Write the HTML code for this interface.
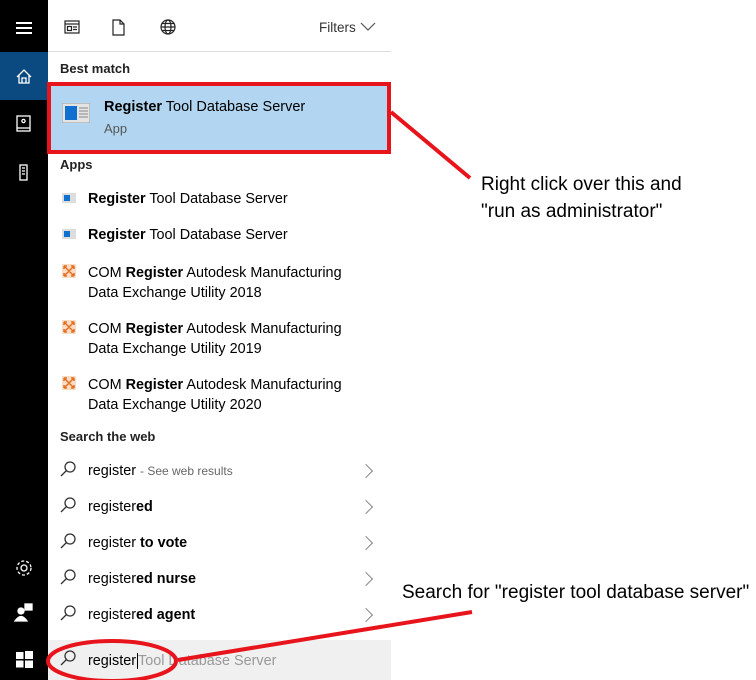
<!DOCTYPE html>
<html><head><meta charset="utf-8"><style>
*{margin:0;padding:0;box-sizing:border-box}
body{width:756px;height:680px;background:#fff;position:relative;overflow:hidden;font-family:"Liberation Sans",sans-serif;color:#000;font-size:14.4px}
.abs{position:absolute}
.side{left:0;top:0;width:48px;height:680px;background:#000}
.t{position:absolute;white-space:nowrap}
b{font-weight:bold}
.hdr{font-size:13px;font-weight:bold;color:#222}
.chev{position:absolute;left:361px;width:10px;height:10px;border-right:1.5px solid #888;border-top:1.5px solid #888;transform:rotate(45deg)}
.ann{font-size:19px;color:#000}
</style></head><body>
<div class="abs side"></div>
<div class="abs" style="left:0;top:52px;width:48px;height:48px;background:#0a4a80"></div>
<div class="abs" style="left:16px;top:22px;width:16px;height:1.5px;background:#fff"></div>
<div class="abs" style="left:16px;top:27px;width:16px;height:1.5px;background:#fff"></div>
<div class="abs" style="left:16px;top:32px;width:16px;height:1.5px;background:#fff"></div>
<svg class="abs" style="left:0;top:0" width="48" height="680" fill="none" stroke="#fff" stroke-width="1.3">
<path d="M17 77 L24 70 L31 77 M19 75 V83 H29 V75 M22 83 V78 H26 V83"/>
<rect x="17" y="116" width="13" height="15"/><circle cx="23.5" cy="121" r="1.6"/><path d="M17 128 H30"/>
<rect x="20" y="165" width="7" height="15"/><path d="M22 168 H25 M22 171 H25 M22 174 H25"/>
<circle cx="24" cy="568" r="3"/><circle cx="24" cy="568" r="7" stroke-dasharray="3 2"/>
<circle cx="21" cy="611" r="3" fill="#fff"/><path d="M15 621 Q21 612 27 621 Z" fill="#fff"/><rect x="25" y="604" width="7" height="6" fill="#fff"/>
</svg>
<svg class="abs" style="left:16px;top:651px" width="17" height="17"><rect x="0" y="1" width="7.5" height="7" fill="#fff"/><rect x="9" y="0" width="8" height="8" fill="#fff"/><rect x="0" y="9.5" width="7.5" height="7" fill="#fff"/><rect x="9" y="9.5" width="8" height="8" fill="#fff"/></svg>
<svg class="abs" style="left:48px;top:0" width="344" height="52" fill="none" stroke="#222" stroke-width="1.2">
<rect x="17" y="21" width="14" height="12"/><path d="M17 24 H31"/><rect x="19.5" y="26.5" width="4" height="4"/><path d="M25 27 H29 M25 29.5 H29"/>
<path d="M65 20 H72 L76 24 V35 H65 Z M72 20 V24 H76"/>
<circle cx="120" cy="27" r="7"/><ellipse cx="120" cy="27" rx="3" ry="7"/><path d="M113 27 H127 M114 23.5 H126 M114 30.5 H126"/>
<path d="M313 23 L320 30 L327 23" stroke="#555"/>
</svg>
<div class="t" style="left:319px;top:20px;color:#333;font-size:13.5px">Filters</div>
<div class="abs" style="left:48px;top:51px;width:343px;height:1px;background:#ddd"></div>
<div class="t hdr" style="left:60px;top:61px">Best match</div>
<div class="abs" style="left:48px;top:85px;width:343px;height:68px;background:#b2d6f1"></div>
<svg class="abs" style="left:62px;top:103px" width="28" height="20"><rect x="0" y="0" width="28" height="20" fill="#e4e4e4" stroke="#999" stroke-width="1"/><rect x="3" y="3" width="12" height="14" fill="#1070d0"/><path d="M17 5 H26 M17 8 H26 M17 11 H26 M17 14 H26" stroke="#888"/></svg>
<div class="t" style="left:104px;top:99px;font-size:14.5px"><b>Register</b> Tool Database Server</div>
<div class="t" style="left:104px;top:121px;font-size:13px;color:#555">App</div>
<div class="t hdr" style="left:60px;top:157px">Apps</div>
<svg class="abs" style="left:62px;top:193px" width="14" height="10"><rect width="14" height="10" fill="#ddd"/><rect x="2" y="2" width="6" height="6" fill="#1070d0"/></svg>
<div class="t" style="left:88px;top:191px"><b>Register</b> Tool Database Server</div>
<svg class="abs" style="left:62px;top:229px" width="14" height="10"><rect width="14" height="10" fill="#ddd"/><rect x="2" y="2" width="6" height="6" fill="#1070d0"/></svg>
<div class="t" style="left:88px;top:227px"><b>Register</b> Tool Database Server</div>
<svg class="abs" style="left:62px;top:264px" width="14" height="14"><rect width="14" height="14" fill="#f9dcc8"/><path d="M2 2 L12 12 M12 2 L2 12 M2 2 H5 M2 2 V5 M12 2 H9 M12 2 V5 M2 12 H5 M2 12 V9 M12 12 H9 M12 12 V9" stroke="#e4701e" stroke-width="1.5"/></svg>
<div class="t" style="left:88px;top:263px;line-height:20px">COM <b>Register</b> Autodesk Manufacturing<br>Data Exchange Utility 2018</div>
<svg class="abs" style="left:62px;top:320px" width="14" height="14"><rect width="14" height="14" fill="#f9dcc8"/><path d="M2 2 L12 12 M12 2 L2 12 M2 2 H5 M2 2 V5 M12 2 H9 M12 2 V5 M2 12 H5 M2 12 V9 M12 12 H9 M12 12 V9" stroke="#e4701e" stroke-width="1.5"/></svg>
<div class="t" style="left:88px;top:319px;line-height:20px">COM <b>Register</b> Autodesk Manufacturing<br>Data Exchange Utility 2019</div>
<svg class="abs" style="left:62px;top:376px" width="14" height="14"><rect width="14" height="14" fill="#f9dcc8"/><path d="M2 2 L12 12 M12 2 L2 12 M2 2 H5 M2 2 V5 M12 2 H9 M12 2 V5 M2 12 H5 M2 12 V9 M12 12 H9 M12 12 V9" stroke="#e4701e" stroke-width="1.5"/></svg>
<div class="t" style="left:88px;top:375px;line-height:20px">COM <b>Register</b> Autodesk Manufacturing<br>Data Exchange Utility 2020</div>
<div class="t hdr" style="left:60px;top:429px">Search the web</div>
<svg class="abs" style="left:48px;top:450px" width="344" height="230" fill="none" stroke="#333" stroke-width="1.3">
<g id="m"><circle cx="22" cy="17" r="5"/><path d="M18.5 20.5 L13 26"/></g>
<use href="#m" y="36"/><use href="#m" y="72"/><use href="#m" y="108"/><use href="#m" y="144"/><use href="#m" y="190"/>
</svg>
<div class="chev" style="top:466px"></div><div class="chev" style="top:502px"></div><div class="chev" style="top:538px"></div><div class="chev" style="top:574px"></div><div class="chev" style="top:610px"></div>
<div class="t" style="left:88px;top:463px">register <span style="font-size:12px;color:#666">- See web results</span></div>
<div class="t" style="left:88px;top:499px">register<b>ed</b></div>
<div class="t" style="left:88px;top:535px">register <b>to vote</b></div>
<div class="t" style="left:88px;top:571px">register<b>ed nurse</b></div>
<div class="t" style="left:88px;top:607px">register<b>ed agent</b></div>
<div class="abs" style="left:48px;top:640px;width:343px;height:40px;background:#f0f0f0"></div>
<svg class="abs" style="left:48px;top:640px" width="40" height="40" fill="none" stroke="#333" stroke-width="1.3"><circle cx="22" cy="16" r="5"/><path d="M18.5 19.5 L13 25"/></svg>
<div class="t" style="left:88px;top:653px">register<span style="border-left:1px solid #000;margin-left:1px"></span><span style="color:#999">Tool Database Server</span></div>
<div class="t ann" style="left:481px;top:171px;line-height:27px">Right click over this and<br>"run as administrator"</div>
<div class="t ann" style="left:402px;top:582px">Search for "register tool database server"</div>
<svg class="abs" style="left:0;top:0" width="756" height="680" fill="none" stroke="#e8141c" stroke-width="4">
<rect x="49" y="84" width="340" height="68"/>
<path d="M391 112 L470 178"/>
<ellipse cx="112" cy="661" rx="64" ry="20"/>
<path d="M178 660 L472 612"/>
</svg>
</body></html>
